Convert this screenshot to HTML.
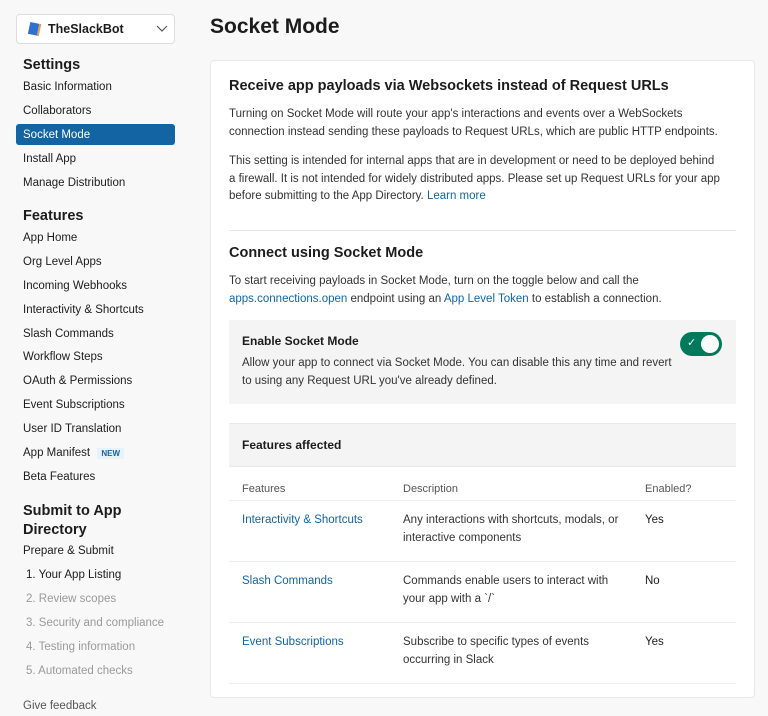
<!DOCTYPE html><html><head><style>
body{margin:0;width:768px;height:716px;overflow:hidden;background:#f8f8f8;font-family:"Liberation Sans",sans-serif;color:#1d1c1d;position:relative}
.a{position:absolute}
.sb{left:16px;top:14px;width:157px;height:28px;border:1px solid #ddd;border-radius:4px;background:#fff}
.nav div{position:absolute;left:23px;font-size:11.5px;white-space:nowrap}
.nav .h{font-size:14.5px;font-weight:bold}
.nav .g{color:#999}
.sel{position:absolute;left:16px;top:124px;width:159px;height:21px;background:#1264a3;border-radius:3px}
.card{left:210px;top:60px;width:543px;height:636px;background:#fff;border:1px solid #e8e8e8;border-radius:4px}
p{margin:0}
.t{font-size:11.5px;line-height:17.5px;color:#333;white-space:nowrap}
a{color:#1264a3;text-decoration:none}
</style></head><body>
<div class="a sb"><div class="a" style="left:12px;top:8px;width:9px;height:12px;background:#2d6fd6;transform:rotate(12deg);border-right:2px solid #e8a33a"></div>
<div class="a" style="left:31px;top:7px;font-size:12.5px;font-weight:bold">TheSlackBot</div>
<svg class="a" style="left:139px;top:10px" width="12" height="8"><path d="M1 1l5 5 5-5" stroke="#555" fill="none" stroke-width="1.2"/></svg></div>
<div class="sel"></div>
<div class="nav">
<div class="h" style="top:57px">Settings</div>
<div style="top:81px">Basic Information</div>
<div style="top:105px">Collaborators</div>
<div style="top:129px;color:#fff">Socket Mode</div>
<div style="top:153px">Install App</div>
<div style="top:177px">Manage Distribution</div>
<div class="h" style="top:208px">Features</div>
<div style="top:232px">App Home</div>
<div style="top:256px">Org Level Apps</div>
<div style="top:280px">Incoming Webhooks</div>
<div style="top:304px">Interactivity &amp; Shortcuts</div>
<div style="top:328px">Slash Commands</div>
<div style="top:351px">Workflow Steps</div>
<div style="top:375px">OAuth &amp; Permissions</div>
<div style="top:399px">Event Subscriptions</div>
<div style="top:423px">User ID Translation</div>
<div style="top:447px">App Manifest <span style="font-size:8px;color:#1264a3;background:#e8f2fa;padding:1px 4px;margin-left:4px;font-weight:bold">NEW</span></div>
<div style="top:471px">Beta Features</div>
<div class="h" style="top:502px;line-height:19px">Submit to App<br>Directory</div>
<div style="top:545px">Prepare &amp; Submit</div>
<div style="top:569px;left:26px">1. Your App Listing</div>
<div class="g" style="top:593px;left:26px">2. Review scopes</div>
<div class="g" style="top:617px;left:26px">3. Security and compliance</div>
<div class="g" style="top:641px;left:26px">4. Testing information</div>
<div class="g" style="top:665px;left:26px">5. Automated checks</div>
<div style="top:700px;color:#555">Give feedback</div>
</div>
<div class="a" style="left:210px;top:15px;font-size:21px;font-weight:bold">Socket Mode</div>
<div class="a card">
<div class="a" style="left:18px;top:17px;font-size:14.5px;font-weight:bold">Receive app payloads via Websockets instead of Request URLs</div>
<p class="a t" style="left:18px;top:45px">Turning on Socket Mode will route your app's interactions and events over a WebSockets<br>connection instead sending these payloads to Request URLs, which are public HTTP endpoints.</p>
<p class="a t" style="left:18px;top:92px">This setting is intended for internal apps that are in development or need to be deployed behind<br>a firewall. It is not intended for widely distributed apps. Please set up Request URLs for your app<br>before submitting to the App Directory. <a>Learn more</a></p>
<div class="a" style="left:18px;top:169px;width:507px;border-top:1px solid #e8e8e8"></div>
<div class="a" style="left:18px;top:184px;font-size:14.5px;font-weight:bold">Connect using Socket Mode</div>
<p class="a t" style="left:18px;top:212px">To start receiving payloads in Socket Mode, turn on the toggle below and call the<br><a>apps.connections.open</a> endpoint using an <a>App Level Token</a> to establish a connection.</p>
<div class="a" style="left:18px;top:259px;width:507px;height:84px;background:#f4f4f4">
<div class="a" style="left:13px;top:14px;font-size:12px;font-weight:bold">Enable Socket Mode</div>
<p class="a t" style="left:13px;top:35px">Allow your app to connect via Socket Mode. You can disable this any time and revert<br>to using any Request URL you've already defined.</p>
<div class="a" style="left:451px;top:12px;width:42px;height:24px;background:#007a5a;border-radius:12px"><span class="a" style="left:7px;top:4px;color:#fff;font-size:11px">✓</span><div class="a" style="left:21px;top:3px;width:18px;height:18px;border-radius:50%;background:#fff"></div></div>
</div>
<div class="a" style="left:18px;top:362px;width:507px;height:42px;background:#f4f4f4;border-top:1px solid #e8e8e8;border-bottom:1px solid #e8e8e8">
<div class="a" style="left:13px;top:14px;font-size:12px;font-weight:bold">Features affected</div></div>
<div class="a" style="left:18px;top:406px;width:507px;font-size:11.5px">
<div style="position:relative;height:33px;border-bottom:1px solid #eee;font-size:11px;color:#555"><span class="a" style="left:13px;top:16px">Features</span><span class="a" style="left:174px;top:16px">Description</span><span class="a" style="left:416px;top:16px">Enabled?</span></div>
<div style="position:relative;height:60px;border-bottom:1px solid #eee"><a class="a" style="left:13px;top:13px">Interactivity &amp; Shortcuts</a><span class="a t" style="left:174px;top:11px">Any interactions with shortcuts, modals, or<br>interactive components</span><span class="a" style="left:416px;top:13px">Yes</span></div>
<div style="position:relative;height:60px;border-bottom:1px solid #eee"><a class="a" style="left:13px;top:13px">Slash Commands</a><span class="a t" style="left:174px;top:11px">Commands enable users to interact with<br>your app with a `/`</span><span class="a" style="left:416px;top:13px">No</span></div>
<div style="position:relative;height:60px;border-bottom:1px solid #eee"><a class="a" style="left:13px;top:13px">Event Subscriptions</a><span class="a t" style="left:174px;top:11px">Subscribe to specific types of events<br>occurring in Slack</span><span class="a" style="left:416px;top:13px">Yes</span></div>
</div>
</div>
</body></html>
